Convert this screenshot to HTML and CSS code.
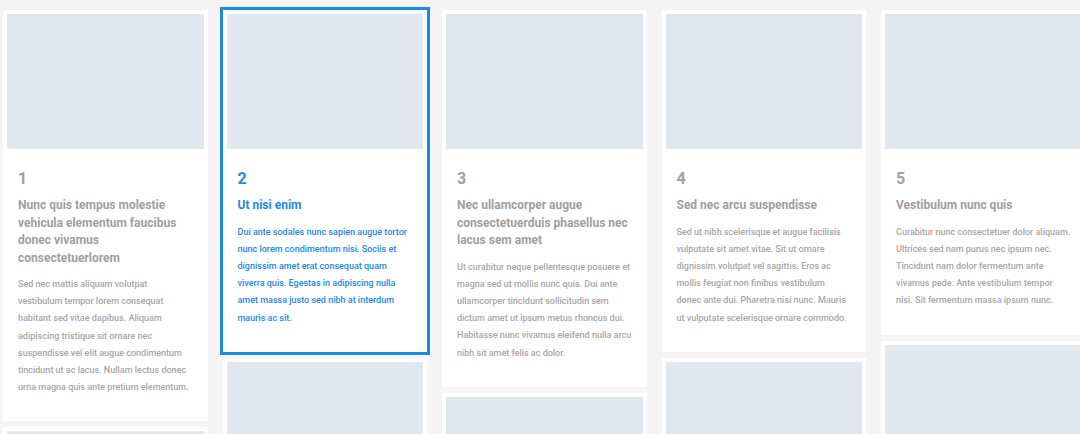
FILE: index.html
```html
<!DOCTYPE html>
<html lang="en">
<head>
<meta charset="utf-8">
<title>Cards</title>
<link rel="stylesheet" href="styles.css">
</head>
<body>
<main class="board">
  <div class="col">
    <article class="card">
      <div class="thumb"></div>
      <div class="content">
        <div class="num">1</div>
        <h2 class="title">Nunc quis tempus molestie vehicula elementum faucibus donec vivamus consectetuerlorem</h2>
        <p class="body">Sed nec mattis aliquam volutpat vestibulum tempor lorem consequat habitant sed vitae dapibus. Aliquam adipiscing tristique sit ornare nec suspendisse vel elit augue condimentum tincidunt ut ac lacus. Nullam lectus donec urna magna quis ante pretium elementum.</p>
      </div>
    </article>
    <article class="card">
      <div class="thumb"></div>
    </article>
  </div>
  <div class="col">
    <article class="card selected">
      <div class="thumb"></div>
      <div class="content">
        <div class="num">2</div>
        <h2 class="title">Ut nisi enim</h2>
        <p class="body">Dui ante sodales nunc sapien augue tortor nunc lorem condimentum nisi. Sociis et dignissim amet erat consequat quam viverra quis. Egestas in adipiscing nulla amet massa justo sed nibh at interdum mauris ac sit.</p>
      </div>
    </article>
    <article class="card">
      <div class="thumb"></div>
    </article>
  </div>
  <div class="col">
    <article class="card">
      <div class="thumb"></div>
      <div class="content">
        <div class="num">3</div>
        <h2 class="title">Nec ullamcorper augue consectetuerduis phasellus nec lacus sem amet</h2>
        <p class="body">Ut curabitur neque pellentesque posuere et magna sed ut mollis nunc quis. Dui ante ullamcorper tincidunt sollicitudin sem dictum amet ut ipsum metus rhoncus dui. Habitasse nunc vivamus eleifend nulla arcu nibh sit amet felis ac dolor.</p>
      </div>
    </article>
    <article class="card">
      <div class="thumb"></div>
    </article>
  </div>
  <div class="col">
    <article class="card">
      <div class="thumb"></div>
      <div class="content">
        <div class="num">4</div>
        <h2 class="title">Sed nec arcu suspendisse</h2>
        <p class="body">Sed ut nibh scelerisque et augue facilisis vulputate sit amet vitae. Sit ut ornare dignissim volutpat vel sagittis. Eros ac mollis feugiat non finibus vestibulum donec ante dui. Pharetra nisi nunc. Mauris ut vulputate scelerisque ornare commodo.</p>
      </div>
    </article>
    <article class="card">
      <div class="thumb"></div>
    </article>
  </div>
  <div class="col">
    <article class="card">
      <div class="thumb"></div>
      <div class="content">
        <div class="num">5</div>
        <h2 class="title">Vestibulum nunc quis</h2>
        <p class="body">Curabitur nunc consectetuer dolor aliquam. Ultrices sed nam purus nec ipsum nec. Tincidunt nam dolor fermentum ante vivamus pede. Ante vestibulum tempor nisi. Sit fermentum massa ipsum nunc.</p>
      </div>
    </article>
    <article class="card">
      <div class="thumb"></div>
    </article>
  </div>
</main>
</body>
</html>
```
FILE: styles.css
```css
html, body {
  margin: 0;
  padding: 0;
  background: #f5f3f3;
  overflow: hidden;
}
body {
  width: 1080px;
  height: 434px;
  font-family: Roboto, "Liberation Sans", sans-serif;
}
.board {
  display: grid;
  grid-template-columns: repeat(5, 204.5px);
  column-gap: 15px;
  padding: 10px 0 0 3px;
  width: 1110px;
  align-items: start;
}
.col {
  display: flex;
  flex-direction: column;
  gap: 6px;
}
.card {
  background: #ffffff;
  padding: 4px 4px 25px;
}
.card.selected {
  outline: 3px solid #1e88e5;
}
.thumb {
  height: 135px;
  background: #e1e7ef;
}
.content {
  padding: 20px 11px 0;
}
.num {
  font-size: 16px;
  font-weight: 700;
  line-height: 20px;
  color: #a3a0a0;
}
.title {
  margin: 8px 0 0;
  font-size: 12px;
  font-weight: 700;
  line-height: 17.5px;
  color: #a29e9e;
}
.body {
  margin: 9px 0 0;
  font-size: 9px;
  font-weight: 500;
  line-height: 17.2px;
  color: #aaa6a6;
}
.selected .num,
.selected .title,
.selected .body {
  color: #1e88e5;
}
```
